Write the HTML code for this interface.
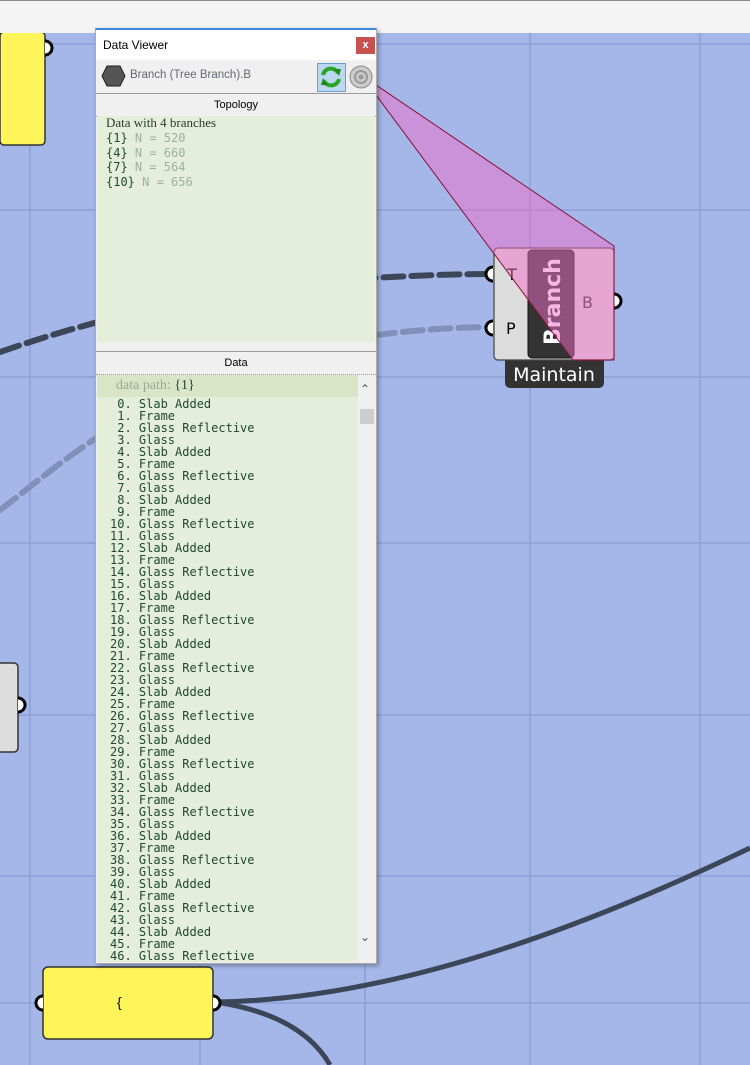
<!DOCTYPE html>
<html><head><meta charset="utf-8"><style>
body{margin:0;width:750px;height:1065px;overflow:hidden;position:relative;background:#a5b7e9;font-family:"Liberation Sans",sans-serif}
.abs{position:absolute}
.mono{font-family:"DejaVu Sans Mono","Liberation Mono",monospace;font-size:12px;color:#1f4a2c;line-height:12px;white-space:pre}
</style></head><body>
<svg class="abs" style="left:0;top:0" width="750" height="1065">
<g stroke="#8e9fd8" stroke-width="1.5">
<line x1="30" y1="32" x2="30" y2="1065"/><line x1="365" y1="32" x2="365" y2="1065"/><line x1="530" y1="32" x2="530" y2="1065"/><line x1="700" y1="32" x2="700" y2="1065"/><line x1="200" y1="32" x2="200" y2="1065"/>
<line x1="0" y1="44" x2="750" y2="44"/><line x1="0" y1="210" x2="750" y2="210"/><line x1="0" y1="377" x2="750" y2="377"/><line x1="0" y1="543" x2="750" y2="543"/><line x1="0" y1="715" x2="750" y2="715"/><line x1="0" y1="876" x2="750" y2="876"/><line x1="0" y1="1003" x2="750" y2="1003"/>
</g>
<path d="M0 352 C150 300 300 275 493 274" stroke="#3d4558" stroke-width="6" fill="none" stroke-dasharray="20 8" stroke-linecap="round"/>
<path d="M0 510 C80 450 200 330 493 327" stroke="#8090b8" stroke-width="6" fill="none" stroke-dasharray="20 8" stroke-linecap="round"/>
<path d="M215 1002 C400 1000 600 920 750 848" stroke="#3d4558" stroke-width="5" fill="none"/>
<path d="M215 1002 C270 1010 310 1030 330 1065" stroke="#3d4558" stroke-width="5" fill="none"/>
<rect x="0" y="32" width="45" height="113" rx="4" fill="#fff55a" stroke="#333" stroke-width="1.5"/>
<path d="M45 41 a7 7 0 0 1 0 14" fill="#fff" stroke="#000" stroke-width="3"/>
<rect x="-10" y="663" width="28" height="89" rx="4" fill="#ddd" stroke="#333" stroke-width="1.5"/>
<path d="M18 698 a7 7 0 0 1 0 14" fill="#fff" stroke="#000" stroke-width="3"/>
<rect x="43" y="967" width="170" height="72" rx="5" fill="#fff55a" stroke="#333" stroke-width="1.5"/>
<path d="M43 996 a7 7 0 0 0 0 14" fill="#fff" stroke="#000" stroke-width="3"/>
<path d="M213 996 a7 7 0 0 1 0 14" fill="#fff" stroke="#000" stroke-width="3"/>
<text x="117" y="1007" font-family="Liberation Sans" font-size="14">{</text>
<rect x="505" y="350" width="99" height="38" rx="5" fill="#333"/>
<text x="554" y="381" text-anchor="middle" font-family="DejaVu Sans" font-size="19" fill="#fff">Maintain</text>
<rect x="494" y="248" width="120" height="112" rx="4" fill="#dcdcdc" stroke="#444" stroke-width="1.2"/>
<rect x="528" y="250" width="46" height="108" rx="4" fill="#333" stroke="#111"/>
<text x="0" y="0" transform="translate(560 345) rotate(-90)" font-family="DejaVu Sans" font-weight="bold" font-size="22" fill="#fff">Branch</text>
<text x="507" y="280" font-size="16" font-family="DejaVu Sans">T</text>
<text x="506" y="334" font-size="16" font-family="DejaVu Sans">P</text>
<text x="582" y="308" font-size="16" font-family="DejaVu Sans" fill="#333">B</text>
<path d="M493 267 a7 7 0 0 0 0 14" fill="#fff" stroke="#000" stroke-width="3"/>
<path d="M493 321 a7 7 0 0 0 0 14" fill="#fff" stroke="#000" stroke-width="3"/>
<path d="M614 294 a7 7 0 0 1 0 14" fill="#fff" stroke="#000" stroke-width="3"/>
<polygon points="376,85 614,246 614,360 573,360 376,95" fill="rgba(240,110,200,0.5)" stroke="#8a1030" stroke-width="1"/>
</svg>
<div class="abs" style="left:0;top:0;width:750px;height:32px;background:#f3f3f3;border-top:1px solid #888"></div>
<div class="abs" style="left:95px;top:28px;width:280px;height:933px;background:#f0f0f0;border:1px solid #aaa;border-top:2px solid #3c8ad8;box-shadow:2px 2px 4px rgba(0,0,0,.3)">
 <div class="abs" style="left:0;top:0;width:280px;height:30px;background:#fff"></div>
 <div class="abs" style="left:7px;top:8px;font-size:12px">Data Viewer</div>
 <div class="abs" style="left:260px;top:7px;width:19px;height:17px;background:#c75050;color:#fff;font-size:11px;text-align:center;line-height:16px;font-weight:bold">x</div>
 <svg class="abs" style="left:5px;top:35px" width="25" height="22"><polygon points="6,1 19,1 24,11 19,21 6,21 1,11" fill="#555" stroke="#222"/></svg>
 <div class="abs" style="left:34px;top:39px;font-size:11.5px;color:#667">Branch (Tree Branch).B</div>
 <div class="abs" style="left:221px;top:33px;width:27px;height:27px;background:#bcd8f0;border:1px solid #6aa0d0"></div>
 <svg class="abs" style="left:223px;top:35px" width="24" height="24"><path d="M4 10 A8 8 0 0 1 19 8" fill="none" stroke="#2aa52a" stroke-width="4"/><path d="M20 14 A8 8 0 0 1 5 16" fill="none" stroke="#2aa52a" stroke-width="4"/><path d="M15 4 l7 0 -2 7z M9 20 l-7 0 2 -7z" fill="#1a8a1a"/></svg>
 <svg class="abs" style="left:252px;top:34px" width="26" height="26"><circle cx="13" cy="13" r="11" fill="#ccc" stroke="#888"/><circle cx="13" cy="13" r="6" fill="none" stroke="#999" stroke-width="2"/><circle cx="13" cy="13" r="2.5" fill="#999"/></svg>
 <div class="abs" style="left:0;top:63px;width:280px;height:22px;border-top:1px solid #999;border-bottom:1px solid #999;background:#f0f0f0;text-align:center;font-size:11px;line-height:22px">Topology</div>
 <div class="abs" style="left:1px;top:86px;width:278px;height:226px;background:#e5eedb"></div>
 <div class="abs" style="left:10px;top:85px;font-family:'Liberation Serif',serif;font-size:13px;color:#2a3a2a">Data with 4 branches</div>
 <div class="abs mono" style="left:10px;top:101px;line-height:14.5px;color:#a0b0a0"><span style="color:#1f4a2c">{1}</span> N = 520
<span style="color:#1f4a2c">{4}</span> N = 660
<span style="color:#1f4a2c">{7}</span> N = 564
<span style="color:#1f4a2c">{10}</span> N = 656</div>
 <div class="abs" style="left:0;top:321px;width:280px;height:22px;border-top:1px solid #999;border-bottom:1px dotted #999;background:#f0f0f0;text-align:center;font-size:11px;line-height:22px">Data</div>
 <div class="abs" style="left:1px;top:345px;width:261px;height:587px;background:#e5eedb;overflow:hidden">
  <div style="height:22px;background:#d9e5c6;font-family:'Liberation Serif',serif;font-size:14px;color:#9aaa90;padding-left:19px;line-height:22px">data path: <span style="color:#1f4a2c">{1}</span></div>
  <div class="mono" style="padding-left:13px;margin-top:1px"> 0. Slab Added
 1. Frame
 2. Glass Reflective
 3. Glass
 4. Slab Added
 5. Frame
 6. Glass Reflective
 7. Glass
 8. Slab Added
 9. Frame
10. Glass Reflective
11. Glass
12. Slab Added
13. Frame
14. Glass Reflective
15. Glass
16. Slab Added
17. Frame
18. Glass Reflective
19. Glass
20. Slab Added
21. Frame
22. Glass Reflective
23. Glass
24. Slab Added
25. Frame
26. Glass Reflective
27. Glass
28. Slab Added
29. Frame
30. Glass Reflective
31. Glass
32. Slab Added
33. Frame
34. Glass Reflective
35. Glass
36. Slab Added
37. Frame
38. Glass Reflective
39. Glass
40. Slab Added
41. Frame
42. Glass Reflective
43. Glass
44. Slab Added
45. Frame
46. Glass Reflective</div>
 </div>
 <div class="abs" style="left:262px;top:345px;width:17px;height:587px;background:#f0f0f0"></div>
 <div class="abs" style="left:264px;top:352px;font-size:12px;color:#555">&#8963;</div>
 <div class="abs" style="left:264px;top:379px;width:14px;height:15px;background:#cdcdcd"></div>
 <div class="abs" style="left:264px;top:900px;font-size:12px;color:#555">&#8964;</div>
</div>
</body></html>
